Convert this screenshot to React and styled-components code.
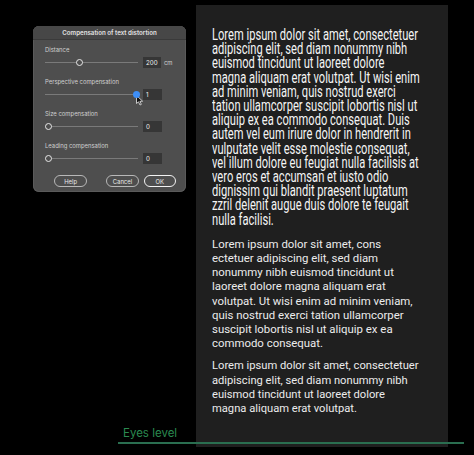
import React from "react";
import styled, { createGlobalStyle } from "styled-components";

const Global = createGlobalStyle`
  html, body { margin: 0; padding: 0; background: #000; }
  body { font-family: Inter, "Liberation Sans", sans-serif; }
`;

const Stage = styled.div`
  position: relative;
  width: 474px;
  height: 455px;
  overflow: hidden;
  background: #000;
  display: flex;
  flex-direction: row;
  align-items: flex-start;
`;

const LeftCol = styled.div`
  width: 196px;
  flex: none;
  padding: 26px 0 0 33px;
  box-sizing: border-box;
`;

const Dialog = styled.div`
  position: relative;
  width: 153px;
  height: 166px;
  background: #4e4e4e;
  border-radius: 6px;
  box-shadow: 0 0 0 1px #5a5a5a inset;
  overflow: hidden;
  display: flex;
  flex-direction: column;
`;

const TitleBar = styled.div`
  height: 13px;
  display: flex;
  align-items: center;
  justify-content: center;
  background: #474747;
  border-bottom: 1px solid #3a3a3a;
  color: #e2e2e2;
  font-size: 6.2px;
  font-weight: 600;
`;

const Body = styled.div`
  padding: 6px 10px 0 12px;
  display: flex;
  flex-direction: column;
`;

const Field = styled.div`
  height: 32px;
  display: flex;
  flex-direction: column;
`;

const Label = styled.div`
  color: #cfcfcf;
  font-size: 5.9px;
  height: 8px;
  line-height: 8px;
`;

const Row = styled.div`
  display: flex;
  align-items: center;
  height: 12px;
  margin-top: 2px;
`;

const Track = styled.div`
  position: relative;
  width: 93px;
  height: 1px;
  background: #7a7a7a;
`;

const Thumb = styled.div`
  position: absolute;
  z-index: 1;
  top: -3px;
  width: 7px;
  height: 7px;
  margin-left: -3.5px;
  border-radius: 50%;
  box-sizing: border-box;
  background: ${(p) => (p.$active ? "#3d8ef7" : "#4e4e4e")};
  border: ${(p) => (p.$active ? "none" : "1.2px solid #e8e8e8")};
`;

const NumBox = styled.div`
  margin-left: 5px;
  width: ${(p) => p.$w || 19}px;
  height: 11px;
  background: #363636;
  color: #f0f0f0;
  font-size: 6.2px;
  display: flex;
  align-items: center;
  padding-left: 3px;
  box-sizing: border-box;
`;

const Unit = styled.span`
  margin-left: 3px;
  color: #cfcfcf;
  font-size: 5.9px;
`;

const Buttons = styled.div`
  display: flex;
  align-items: center;
  padding: 1px 0 0 9px;
`;

const Btn = styled.div`
  width: ${(p) => p.$w}px;
  height: 12px;
  margin-left: ${(p) => p.$ml || 0}px;
  border-radius: 7px;
  box-sizing: border-box;
  border: ${(p) => (p.$primary ? "1.5px solid #f2f2f2" : "1px solid #b8b8b8")};
  color: #e8e8e8;
  font-size: 5.9px;
  display: flex;
  align-items: center;
  justify-content: center;
`;

const Cursor = styled.svg`
  position: absolute;
  left: 103px;
  top: 69px;
`;

const Panel = styled.div`
  margin-top: 5px;
  width: 252px;
  height: 442px;
  background: #1f1f1f;
  padding: 22px 0 0 16px;
  box-sizing: border-box;
  flex: none;
`;

const Narrow = styled.div`
  color: #f4f4f4;
  font-family: Roboto, "Liberation Sans", sans-serif;
  font-size: 17px;
  line-height: 14.2px;
  white-space: nowrap;
  transform: scaleX(0.655);
  transform-origin: left top;
`;

const Para = styled.div`
  color: #ececec;
  font-family: Roboto, "Liberation Sans", sans-serif;
  font-size: 11.4px;
  line-height: 14.2px;
  white-space: nowrap;
  margin-top: ${(p) => p.$mt}px;
  transform: scaleX(${(p) => p.$sx || 1});
  transform-origin: left top;
`;

const EyeLevel = styled.div`
  position: absolute;
  left: 118px;
  top: 426px;
  width: 346px;
  display: flex;
  flex-direction: column;
`;

const EyeText = styled.div`
  color: #2b8a50;
  font-family: Inter, "Liberation Sans", sans-serif;
  font-size: 11.5px;
  padding-left: 5px;
  line-height: 14px;
`;

const EyeLine = styled.div`
  height: 2px;
  margin-top: 2px;
  background: #2a6e50;
`;

const p1 = [
  "Lorem ipsum dolor sit amet, consectetuer",
  "adipiscing elit, sed diam nonummy nibh",
  "euismod tincidunt ut laoreet dolore",
  "magna aliquam erat volutpat. Ut wisi enim",
  "ad minim veniam, quis nostrud exerci",
  "tation ullamcorper suscipit lobortis nisl ut",
  "aliquip ex ea commodo consequat. Duis",
  "autem vel eum iriure dolor in hendrerit in",
  "vulputate velit esse molestie consequat,",
  "vel illum dolore eu feugiat nulla facilisis at",
  "vero eros et accumsan et iusto odio",
  "dignissim qui blandit praesent luptatum",
  "zzril delenit augue duis dolore te feugait",
  "nulla facilisi.",
];

const p2 = [
  "Lorem ipsum dolor sit amet, cons",
  "ectetuer adipiscing elit, sed diam",
  "nonummy nibh euismod tincidunt ut",
  "laoreet dolore magna aliquam erat",
  "volutpat. Ut wisi enim ad minim veniam,",
  "quis nostrud exerci tation ullamcorper",
  "suscipit lobortis nisl ut aliquip ex ea",
  "commodo consequat.",
];

const p3 = [
  "Lorem ipsum dolor sit amet, consectetuer",
  "adipiscing elit, sed diam nonummy nibh",
  "euismod tincidunt ut laoreet dolore",
  "magna aliquam erat volutpat.",
];

const lines = (arr) => arr.map((l, i) => <div key={i}>{l}</div>);

const fields = [
  { label: "Distance", pos: 34, value: "200", unit: "cm", w: 18 },
  { label: "Perspective compensation", pos: 91, value: "1", active: true },
  { label: "Size compensation", pos: 3, value: "0" },
  { label: "Leading compensation", pos: 3, value: "0" },
];

export default function App() {
  return (
    <>
      <Global />
      <Stage>
        <LeftCol>
          <Dialog>
            <TitleBar>Compensation of text distortion</TitleBar>
            <Body>
              {fields.map((f) => (
                <Field key={f.label}>
                  <Label>{f.label}</Label>
                  <Row>
                    <Track>
                      <Thumb $active={f.active} style={{ left: f.pos + "px" }} />
                    </Track>
                    <NumBox $w={f.w}>{f.value}</NumBox>
                    {f.unit && <Unit>{f.unit}</Unit>}
                  </Row>
                </Field>
              ))}
              <Buttons>
                <Btn $w={38}>Help</Btn>
                <Btn $w={37} $ml={19}>Cancel</Btn>
                <Btn $w={37} $ml={5} $primary>OK</Btn>
              </Buttons>
            </Body>
            <Cursor width="8" height="11" viewBox="0 0 8 11">
              <path d="M0.5 0.5 L0.5 8.5 L2.5 6.8 L4 10 L5.3 9.4 L3.9 6.3 L6.6 6.2 Z" fill="#111" stroke="#eee" strokeWidth="0.8" />
            </Cursor>
          </Dialog>
        </LeftCol>
        <Panel>
          <Narrow>{lines(p1)}</Narrow>
          <Para $mt={11}>{lines(p2)}</Para>
          <Para $mt={8} $sx={0.98}>{lines(p3)}</Para>
        </Panel>
        <EyeLevel>
          <EyeText>Eyes level</EyeText>
          <EyeLine />
        </EyeLevel>
      </Stage>
    </>
  );
}
